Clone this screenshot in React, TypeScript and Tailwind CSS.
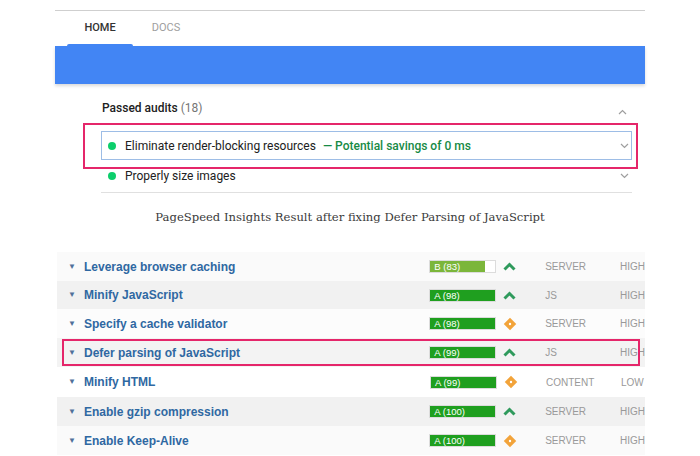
import React from 'react';

type Row = {
  name: string;
  grade: string;
  fill: number;
  icon: 'up' | 'diamond';
  kind: string;
  prio: string;
  bg: string;
  h: string;
  mark?: boolean;
};

const ROWS: Row[] = [
  { name: 'Leverage browser caching', grade: 'B (83)', fill: 0.85, icon: 'up', kind: 'SERVER', prio: 'HIGH', bg: 'bg-[#fafafa]', h: 'h-[29px]' },
  { name: 'Minify JavaScript', grade: 'A (98)', fill: 1, icon: 'up', kind: 'JS', prio: 'HIGH', bg: 'bg-[#f1f1f1]', h: 'h-[28px]' },
  { name: 'Specify a cache validator', grade: 'A (98)', fill: 1, icon: 'diamond', kind: 'SERVER', prio: 'HIGH', bg: 'bg-[#fcfcfc]', h: 'h-[29px]' },
  { name: 'Defer parsing of JavaScript', grade: 'A (99)', fill: 1, icon: 'up', kind: 'JS', prio: 'HIGH', bg: 'bg-[#f3f3f3]', h: 'h-[29px]', mark: true },
  { name: 'Minify HTML', grade: 'A (99)', fill: 1, icon: 'diamond', kind: 'CONTENT', prio: 'LOW', bg: 'bg-white', h: 'h-[30px]' },
  { name: 'Enable gzip compression', grade: 'A (100)', fill: 1, icon: 'up', kind: 'SERVER', prio: 'HIGH', bg: 'bg-[#f1f1f1]', h: 'h-[29px]' },
  { name: 'Enable Keep-Alive', grade: 'A (100)', fill: 1, icon: 'diamond', kind: 'SERVER', prio: 'HIGH', bg: 'bg-[#fafafa]', h: 'h-[29px]' },
];

function ChevronUp() {
  return (
    <svg width="13" height="9" viewBox="0 0 13 9">
      <polyline points="1.5,7.5 6.5,2.5 11.5,7.5" fill="none" stroke="#2f9a5c" strokeWidth="3" />
    </svg>
  );
}

function Diamond() {
  return (
    <svg width="14" height="14" viewBox="0 0 14 14">
      <rect x="2.6" y="2.6" width="8.8" height="8.8" fill="#f2a33a" transform="rotate(45 7 7)" />
      <circle cx="7" cy="7" r="1.2" fill="#fff" />
    </svg>
  );
}

function Caret({ up }: { up?: boolean }) {
  return (
    <svg width="9" height="6" viewBox="0 0 9 6">
      <polyline points={up ? '1,5 4.5,1.5 8,5' : '1,1 4.5,4.5 8,1'} fill="none" stroke="#9e9e9e" strokeWidth="1.2" />
    </svg>
  );
}

function GradeBar({ grade, fill }: { grade: string; fill: number }) {
  const full = fill >= 1;
  return (
    <div className="relative w-[67px] h-[13px] bg-white border border-[#dcdcdc]">
      <div
        className={full ? 'h-full bg-[#1f9f1f]' : 'h-full bg-[#7bb63a]'}
        style={{ width: `${Math.round(fill * 100)}%` }}
      />
      <span className="absolute left-[4px] top-0 leading-[12px] text-[9.5px] text-white">{grade}</span>
    </div>
  );
}

export default function App() {
  return (
    <div className="w-[700px] h-[456px] bg-white overflow-hidden" style={{ fontFamily: 'Roboto, "Liberation Sans", sans-serif' }}>
      {/* top report card */}
      <div className="mx-[55px] mt-[10px] border-t border-[#cfcfcf]">
        <div className="flex h-[35px] items-end pl-[12px]">
          <div className="w-[66px] h-full flex flex-col">
            <div className="flex-1 flex items-center justify-center pt-[2px] text-[11px] font-medium text-[#333]">HOME</div>
            <div className="h-[2px] bg-[#4285f4] rounded-t-sm" />
          </div>
          <div className="w-[66px] h-full flex items-center justify-center text-[11px] text-[#9e9e9e]">DOCS</div>
        </div>
        <div className="h-[38px] bg-[#4285f4] shadow-[0_2px_3px_rgba(0,0,0,0.15)]" />

        <div className="pl-[28px] pr-[7px] pt-[14px]">
          <div className="flex items-center justify-between pl-[19px] pr-[11px] h-[20px]">
            <div className="text-[12px] font-medium text-[#212121]">
              Passed audits <span className="font-normal text-[#757575]">(18)</span>
            </div>
            <div className="mt-[8px]"><Caret up /></div>
          </div>

          <div className="mt-[5px] border-[2.5px] border-[#e5266a] pl-[16px] pr-[4px] pt-[6px] pb-[7px]">
            <div className="flex items-center justify-between h-[29px] border border-[#9dbde6] pl-[6px] pr-[2px]">
              <div className="flex items-center text-[12px] text-[#212121]">
                <span className="w-[8px] h-[8px] rounded-full bg-[#0cce6b] mr-[9px]" />
                <span>Eliminate render-blocking resources</span>
                <span className="ml-[7px] text-[#178a45] font-medium">— Potential savings of 0 ms</span>
              </div>
              <Caret />
            </div>
          </div>

          <div className="ml-[18px] mr-[6px] flex items-start justify-between h-[24px] border-b border-[#e0e0e0] pl-[7px] pr-[3px]">
            <div className="flex items-center h-[14px] text-[12px] leading-[14px] text-[#212121]">
              <span className="w-[8px] h-[8px] rounded-full bg-[#0cce6b] mr-[9px]" />
              <span>Properly size images</span>
            </div>
            <div className="h-[14px] flex items-center"><Caret /></div>
          </div>
        </div>
      </div>

      {/* caption */}
      <div
        className="mt-[15px] text-center text-[11.6px] leading-[18px] text-[#3a3a3a]"
        style={{ fontFamily: '"DejaVu Serif", "Liberation Serif", serif' }}
      >
        PageSpeed Insights Result after fixing Defer Parsing of JavaScript
      </div>

      {/* results table */}
      <div className="ml-[57px] w-[588px] mt-[26px]" style={{ fontFamily: '"Liberation Sans", Arial, sans-serif' }}>
        {ROWS.map(r => (
          <div key={r.name} className={`relative flex items-center ${r.h} ${r.bg}`}>
            <span className="w-[27px] pl-[11px] text-[8px] text-[#50709a]">▼</span>
            <span className="w-[346px] text-[12px] font-bold text-[#2f68a2]">{r.name}</span>
            <GradeBar grade={r.grade} fill={r.fill} />
            <span className="w-[49px] flex pl-[7px]">
              {r.icon === 'up' ? <ChevronUp /> : <Diamond />}
            </span>
            <span className="w-[75px] text-[10px] text-[#999]">{r.kind}</span>
            <span className="text-[10px] text-[#999]">{r.prio}</span>
            {r.mark && (
              <div className="absolute left-[5px] right-[5px] top-[1px] bottom-[1px] border-[2.5px] border-[#e5266a]" />
            )}
          </div>
        ))}
      </div>
    </div>
  );
}
